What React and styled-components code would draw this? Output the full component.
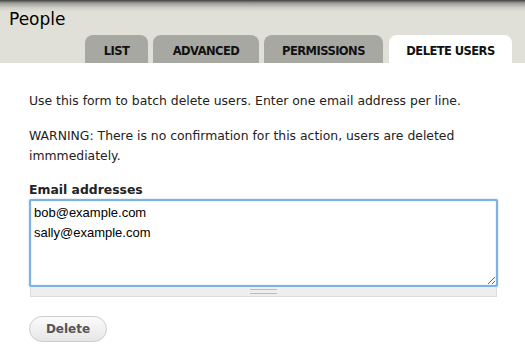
import React, { useEffect, useRef } from "react"
import styled, { createGlobalStyle } from "styled-components"

const GlobalStyle = createGlobalStyle`
  html, body {
    margin: 0;
    padding: 0;
    background: #fff;
  }
  body {
    font-family: "DejaVu Sans", "Liberation Sans", sans-serif;
    color: #222;
  }
`

const Header = styled.header`
  background: linear-gradient(to bottom, #3f3f3d 0px, #9a9a95 3px, #d2d2cb 8px, #e0e0d8 12px);
  padding: 9px 0 0 0;
  height: 54px;
  display: flex;
  flex-direction: column;
  justify-content: space-between;
`

const Title = styled.h1`
  margin: 0;
  padding-left: 9px;
  font-size: 17px;
  font-weight: normal;
  line-height: 20px;
  color: #000;
`

const Tabs = styled.ul`
  list-style: none;
  margin: 0;
  padding: 0 0 0 85px;
  display: flex;
  gap: 5px;
`

const Tab = styled.li`
  height: 28px;
  width: ${(p) => p.$w}px;
  margin-left: ${(p) => (p.$active ? 1 : 0)}px;
  box-sizing: border-box;
  display: flex;
  align-items: center;
  justify-content: center;
  padding-top: 4px;
  border-radius: 8px 8px 0 0;
  background: ${(p) => (p.$active ? "#fff" : "#a8a8a2")};
  font-size: 11.5px;
  font-weight: bold;
  letter-spacing: -0.55px;
  color: #111;
  text-transform: uppercase;
`

const Content = styled.main`
  padding: 28px 29px 20px 29px;
  font-size: 12.4px;
  line-height: 20px;
`

const Para = styled.p`
  margin: 0 0 15px 0;
  color: #222;
`

const Label = styled.label`
  display: block;
  font-weight: bold;
  margin-top: 4px;
  line-height: 18px;
`

const Field = styled.div`
  width: 469px;
`

const TextArea = styled.textarea`
  display: block;
  box-sizing: border-box;
  width: 469px;
  height: 88px;
  margin: 0;
  padding: 2px 3px;
  font-family: "Liberation Sans", Arial, sans-serif;
  font-size: 13px;
  line-height: 20px;
  color: #000;
  caret-color: #000;
  border: 2px solid #7fb1e2;
  box-shadow: 0 0 2px #a8cdf0, inset 0 0 1px #5f9bd8;
  border-radius: 2px;
  resize: vertical;
  outline: none;
`

const Grippie = styled.div`
  height: 9px;
  margin: 0 1px;
  background: #eee;
  border: 1px solid #ddd;
  border-top: none;
  display: flex;
  justify-content: center;
  align-items: center;
`

const GripLines = styled.span`
  width: 27px;
  height: 3px;
  border-top: 1px solid #bbb;
  border-bottom: 1px solid #bbb;
`

const Button = styled.button`
  margin-top: 19px;
  width: 78px;
  height: 26px;
  border-radius: 13px;
  border: 1px solid #ccc;
  background: linear-gradient(to bottom, #fbfbfb, #e6e6e6);
  font-family: "DejaVu Sans", sans-serif;
  font-size: 12px;
  font-weight: bold;
  color: #555;
  padding: 0;
`

const tabs = [
  { label: "List", w: 63 },
  { label: "Advanced", w: 106 },
  { label: "Permissions", w: 119 },
  { label: "Delete users", w: 123, active: true },
]

export default function App() {
  const ref = useRef(null)
  useEffect(() => {
    const el = ref.current
    if (el) {
      el.focus()
      el.setSelectionRange(el.value.length, el.value.length)
    }
  }, [])
  return (
    <>
      <GlobalStyle />
      <Header>
        <Title>People</Title>
        <Tabs>
          {tabs.map((t) => (
            <Tab key={t.label} $w={t.w} $active={t.active}>
              {t.label}
            </Tab>
          ))}
        </Tabs>
      </Header>
      <Content>
        <Para>Use this form to batch delete users. Enter one email address per line.</Para>
        <Para>
          WARNING: There is no confirmation for this action, users are deleted immmediately.
        </Para>
        <Label htmlFor="emails">Email addresses</Label>
        <Field>
          <TextArea
            id="emails"
            ref={ref}
            defaultValue={"bob@example.com\nsally@example.com"}
          />
          <Grippie>
            <GripLines />
          </Grippie>
        </Field>
        <Button>Delete</Button>
      </Content>
    </>
  )
}
